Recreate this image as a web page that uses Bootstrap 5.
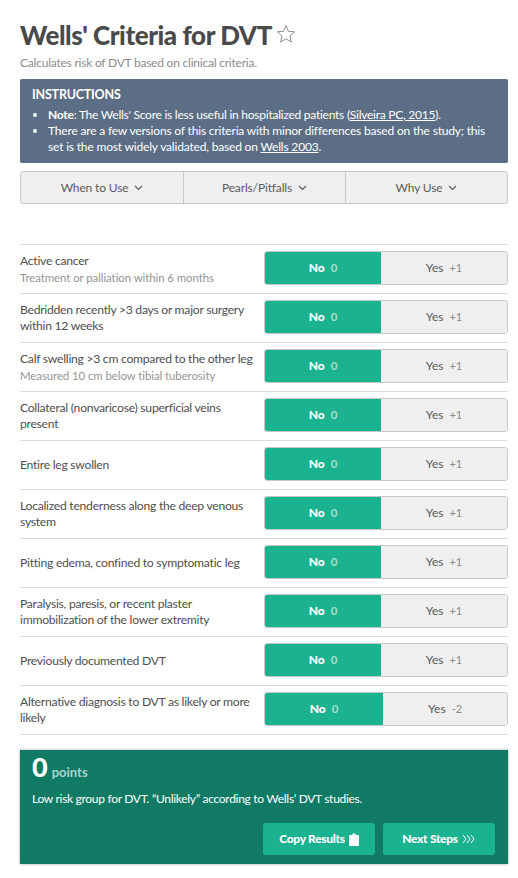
<!DOCTYPE html>
<html lang="en"><head><meta charset="utf-8"><title>Wells' Criteria for DVT</title>
<link rel="stylesheet" href="https://cdn.jsdelivr.net/npm/bootstrap@5.3.0/dist/css/bootstrap.min.css">
<style>
html,body{height:100%}
body{font-family:Lato,"Liberation Sans",sans-serif;color:#4f4f4f;font-size:12px;background:#fff;overflow:hidden}
.sheet{padding:20px 10px 0 20px}
.ttl{font-size:26px;font-weight:900;line-height:31px;margin:0;color:#4a4a4a;letter-spacing:-.45px}
.sub{font-size:12px;line-height:16px;color:#8c8c8c;margin-top:4px;height:18px;letter-spacing:-.22px}
.instr{background:#5b6e85;color:#fff;border-radius:2px;padding:7px 20px 0 12px;height:84px;margin-top:6px;font-size:12px;line-height:16px;letter-spacing:-.18px}
.instr h6{font-size:12.5px;font-weight:700;line-height:17px;margin:0 0 4px;letter-spacing:-.2px}
.instr ul{margin:0;padding-left:16px}
.instr li:first-child{letter-spacing:-.25px}
.instr a{color:#fff}
.tabs{margin-top:8px;height:33px;border:1px solid #c8c8c8;border-radius:3px;background:#efefef;overflow:hidden}
.tabs>div{flex:1;color:#5c5c5c;font-size:12px;letter-spacing:-.15px}
.tabs>div:first-child{flex:0 0 162px}
.tabs>div+div{border-left:1px solid #c8c8c8}
.tabs svg{margin-left:6px}
.crit{margin-top:40px;border-top:1px solid #dcdcdc}
.critrow{height:49px;border-bottom:1px solid #dcdcdc}
.critrow .lbl{width:240px;line-height:16.5px;font-size:12.2px;color:#4f4f4f;letter-spacing:-.28px}
.lbl small{display:block;font-size:11.4px;color:#949494;line-height:15px;letter-spacing:-.06px}
.tog{width:244px;height:34px;border:1px solid #c8c8c8;border-radius:3px;overflow:hidden;flex:none;margin-top:-2px}
.optno{width:116px;background:#1bb28f;color:#fff;font-weight:900;flex:none}
.optno i{font-style:normal;color:#a4e0d0;margin-left:6px;font-size:11.5px;font-weight:700}
.optyes{flex:1;background:#efefef;color:#5a5a5a}
.optyes i{font-style:normal;color:#8a8a8a;margin-left:6px;font-size:11px}
.wide .optno{width:118px}
.res{margin-top:15px;height:114px;background:#117a65;color:#fff;padding:0 12px;box-shadow:0 0 3px rgba(0,0,0,.35)}
.score{line-height:34px;height:36px}
.score b{font-size:27px;font-weight:900}
.score span{font-size:13px;font-weight:700;color:#a9d5c9;margin-left:4px}
.msg{font-size:12px;line-height:16px;margin-top:5px;letter-spacing:-.3px}
.acts{margin-top:16px;gap:8px;margin-right:1px}
.act{width:112px;height:32px;background:#1bb28f;border-radius:3px;font-weight:900;font-size:12px;color:#fff;letter-spacing:-.3px}
.star{margin-left:4px;margin-top:-4px}
</style></head><body>
<div class="sheet">
<div class="d-flex align-items-center"><h1 class="ttl">Wells' Criteria for DVT</h1>
<svg class="star" width="20" height="19" viewBox="0 0 20 19" fill="none" stroke="#8f8f8f" stroke-width="1"><path d="M10 1.500l2.500 5.800 6.200.5-4.700 4.100 1.400 6.100L10 14.800l-5.400 3.200 1.400-6.100L1.300 7.800l6.200-.5z"/></svg></div>
<div class="sub">Calculates risk of DVT based on clinical criteria.</div>
<div class="instr"><h6>INSTRUCTIONS</h6>
<ul><li><b>Note</b>: The Wells' Score is less useful in hospitalized patients (<a href="#">Silveira PC, 2015</a>).</li>
<li>There are a few versions of this criteria with minor differences based on the study; this set is the most widely validated, based on <a href="#">Wells 2003</a>.</li></ul></div>
<div class="tabs d-flex">
<div class="d-flex align-items-center justify-content-center">When to Use<svg width="9" height="6" viewBox="0 0 9 6" fill="none" stroke="#5c5c5c" stroke-width="1.200"><path d="M1 1l3.500 3.500L8 1"/></svg></div>
<div class="d-flex align-items-center justify-content-center">Pearls/Pitfalls<svg width="9" height="6" viewBox="0 0 9 6" fill="none" stroke="#5c5c5c" stroke-width="1.200"><path d="M1 1l3.500 3.500L8 1"/></svg></div>
<div class="d-flex align-items-center justify-content-center">Why Use<svg width="9" height="6" viewBox="0 0 9 6" fill="none" stroke="#5c5c5c" stroke-width="1.200"><path d="M1 1l3.500 3.500L8 1"/></svg></div>
</div>
<div class="crit">
<div class="critrow d-flex align-items-center justify-content-between"><div class="lbl">Active cancer<small>Treatment or palliation within 6 months</small></div><div class="tog d-flex"><div class="optno d-flex align-items-center justify-content-center">No<i>0</i></div><div class="optyes d-flex align-items-center justify-content-center">Yes<i>+1</i></div></div></div>
<div class="critrow d-flex align-items-center justify-content-between"><div class="lbl">Bedridden recently &gt;3 days or major surgery within 12 weeks</div><div class="tog d-flex"><div class="optno d-flex align-items-center justify-content-center">No<i>0</i></div><div class="optyes d-flex align-items-center justify-content-center">Yes<i>+1</i></div></div></div>
<div class="critrow d-flex align-items-center justify-content-between"><div class="lbl">Calf swelling &gt;3 cm compared to the other leg<small>Measured 10 cm below tibial tuberosity</small></div><div class="tog d-flex"><div class="optno d-flex align-items-center justify-content-center">No<i>0</i></div><div class="optyes d-flex align-items-center justify-content-center">Yes<i>+1</i></div></div></div>
<div class="critrow d-flex align-items-center justify-content-between"><div class="lbl">Collateral (nonvaricose) superficial veins present</div><div class="tog d-flex"><div class="optno d-flex align-items-center justify-content-center">No<i>0</i></div><div class="optyes d-flex align-items-center justify-content-center">Yes<i>+1</i></div></div></div>
<div class="critrow d-flex align-items-center justify-content-between"><div class="lbl">Entire leg swollen</div><div class="tog d-flex"><div class="optno d-flex align-items-center justify-content-center">No<i>0</i></div><div class="optyes d-flex align-items-center justify-content-center">Yes<i>+1</i></div></div></div>
<div class="critrow d-flex align-items-center justify-content-between"><div class="lbl">Localized tenderness along the deep venous system</div><div class="tog d-flex"><div class="optno d-flex align-items-center justify-content-center">No<i>0</i></div><div class="optyes d-flex align-items-center justify-content-center">Yes<i>+1</i></div></div></div>
<div class="critrow d-flex align-items-center justify-content-between"><div class="lbl">Pitting edema, confined to symptomatic leg</div><div class="tog d-flex"><div class="optno d-flex align-items-center justify-content-center">No<i>0</i></div><div class="optyes d-flex align-items-center justify-content-center">Yes<i>+1</i></div></div></div>
<div class="critrow d-flex align-items-center justify-content-between"><div class="lbl">Paralysis, paresis, or recent plaster immobilization of the lower extremity</div><div class="tog d-flex"><div class="optno d-flex align-items-center justify-content-center">No<i>0</i></div><div class="optyes d-flex align-items-center justify-content-center">Yes<i>+1</i></div></div></div>
<div class="critrow d-flex align-items-center justify-content-between"><div class="lbl">Previously documented DVT</div><div class="tog d-flex"><div class="optno d-flex align-items-center justify-content-center">No<i>0</i></div><div class="optyes d-flex align-items-center justify-content-center">Yes<i>+1</i></div></div></div>
<div class="critrow wide d-flex align-items-center justify-content-between"><div class="lbl">Alternative diagnosis to DVT as likely or more likely</div><div class="tog d-flex"><div class="optno d-flex align-items-center justify-content-center">No<i>0</i></div><div class="optyes d-flex align-items-center justify-content-center">Yes<i>-2</i></div></div></div>
</div>
<div class="res">
<div class="score"><b>0</b><span>points</span></div>
<div class="msg">Low risk group for DVT. “Unlikely” according to Wells’ DVT studies.</div>
<div class="acts d-flex justify-content-end">
<div class="act d-flex align-items-center justify-content-center">Copy Results<svg class="ms-1" width="10" height="13" viewBox="0 0 10 13" fill="#fff"><path d="M1 2h2.500V.6h3V2H9a1 1 0 0 1 1 1v9a1 1 0 0 1-1 1H1a1 1 0 0 1-1-1V3a1 1 0 0 1 1-1z"/></svg></div>
<div class="act d-flex align-items-center justify-content-center">Next Steps<svg class="ms-1" width="14" height="10" viewBox="0 0 14 10" fill="none" stroke="#fff" stroke-width="1"><path d="M1 1l3 4-3 4M5 1l3 4-3 4M9 1l3 4-3 4"/></svg></div>
</div></div>
</div>
</body></html>
